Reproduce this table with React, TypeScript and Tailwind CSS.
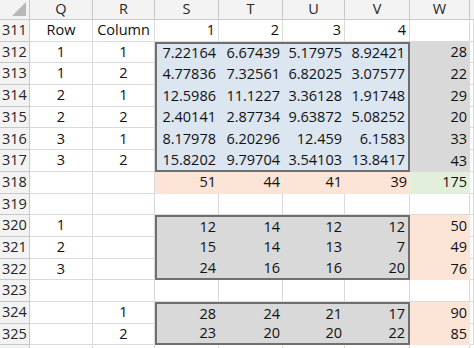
import clsx from "clsx";

type Kind = "head" | "blue" | "sum" | "gray" | "blank";

type SheetRow = {
  n: number;
  q: string;
  r: string;
  vals: string[];
  w: string;
  kind: Kind;
  top?: boolean;
  bottom?: boolean;
};

const ROWS: SheetRow[] = [
  { n: 311, q: "Row", r: "Column", vals: ["1", "2", "3", "4"], w: "", kind: "head" },
  { n: 312, q: "1", r: "1", vals: ["7.22164", "6.67439", "5.17975", "8.92421"], w: "28", kind: "blue", top: true },
  { n: 313, q: "1", r: "2", vals: ["4.77836", "7.32561", "6.82025", "3.07577"], w: "22", kind: "blue" },
  { n: 314, q: "2", r: "1", vals: ["12.5986", "11.1227", "3.36128", "1.91748"], w: "29", kind: "blue" },
  { n: 315, q: "2", r: "2", vals: ["2.40141", "2.87734", "9.63872", "5.08252"], w: "20", kind: "blue" },
  { n: 316, q: "3", r: "1", vals: ["8.17978", "6.20296", "12.459", "6.1583"], w: "33", kind: "blue" },
  { n: 317, q: "3", r: "2", vals: ["15.8202", "9.79704", "3.54103", "13.8417"], w: "43", kind: "blue", bottom: true },
  { n: 318, q: "", r: "", vals: ["51", "44", "41", "39"], w: "175", kind: "sum" },
  { n: 319, q: "", r: "", vals: ["", "", "", ""], w: "", kind: "blank" },
  { n: 320, q: "1", r: "", vals: ["12", "14", "12", "12"], w: "50", kind: "gray", top: true },
  { n: 321, q: "2", r: "", vals: ["15", "14", "13", "7"], w: "49", kind: "gray" },
  { n: 322, q: "3", r: "", vals: ["24", "16", "16", "20"], w: "76", kind: "gray", bottom: true },
  { n: 323, q: "", r: "", vals: ["", "", "", ""], w: "", kind: "blank" },
  { n: 324, q: "", r: "1", vals: ["28", "24", "21", "17"], w: "90", kind: "gray", top: true },
  { n: 325, q: "", r: "2", vals: ["23", "20", "20", "22"], w: "85", kind: "gray", bottom: true },
];

const VAL_WIDTHS = ["w-[64px]", "w-[64px]", "w-[62px]", "w-[65px]"];

const grid = "border-r border-b border-[#dadada]";

function ValueCell({ row, i }: { row: SheetRow; i: number }) {
  const filled = row.kind === "blue" || row.kind === "gray" || row.kind === "sum";
  const boxed = row.kind === "blue" || row.kind === "gray";
  return (
    <div
      className={clsx(
        "flex shrink-0 items-center justify-end px-[3px]",
        VAL_WIDTHS[i],
        !filled && grid,
        row.kind === "blue" && "bg-[#dce6f1]",
        row.kind === "gray" && "bg-[#d9d9d9]",
        row.kind === "sum" && "bg-[#fce4d6]",
        boxed && "border-[#6f6f6f]",
        boxed && row.top && "border-t-2",
        boxed && row.bottom && "border-b-2",
        boxed && i === 0 && "border-l-2",
        boxed && i === 3 && "border-r-2",
      )}
    >
      {row.vals[i]}
    </div>
  );
}

function WCell({ row }: { row: SheetRow }) {
  return (
    <div
      className={clsx(
        "flex w-[60px] shrink-0 items-center justify-end px-[3px]",
        row.kind === "blue" && "bg-[#d9d9d9]",
        row.kind === "sum" && "bg-[#e2efda]",
        row.kind === "gray" && "bg-[#fce4d6]",
        (row.kind === "blank" || row.kind === "head") && grid,
      )}
    >
      {row.w}
    </div>
  );
}

function SheetLine({ row }: { row: SheetRow }) {
  return (
    <div className="flex h-[21.7px]">
      <div className="flex w-[30px] shrink-0 items-center border-r border-b border-[#c8c8c8] bg-[#f3f3f3] pl-[2px] text-[#262626]">
        {row.n}
      </div>
      <div className={clsx("flex w-[63px] shrink-0 items-center justify-center", grid)}>{row.q}</div>
      <div className={clsx("flex w-[62px] shrink-0 items-center justify-center", grid)}>{row.r}</div>
      {row.vals.map((_, i) => (
        <ValueCell key={i} row={row} i={i} />
      ))}
      <WCell row={row} />
      <div className={clsx("flex-1", grid)} />
    </div>
  );
}

export default function App() {
  const headers: [string, string][] = [
    ["Q", "w-[63px]"],
    ["R", "w-[62px]"],
    ["S", "w-[64px]"],
    ["T", "w-[64px]"],
    ["U", "w-[62px]"],
    ["V", "w-[65px]"],
    ["W", "w-[60px]"],
  ];

  return (
    <div className="h-[348px] w-[474px] overflow-hidden bg-white font-['Open_Sans',sans-serif] text-[14.5px] leading-none text-[#111]">
      <div className="flex h-[20px] bg-[#f3f3f3] text-[#262626]">
        <div className="relative w-[30px] shrink-0 border-r border-b border-[#c8c8c8]">
          <svg className="absolute right-[3px] bottom-[3px]" width="14" height="14" viewBox="0 0 14 14">
            <polygon points="14,0 14,14 0,14" fill="#b8b8b8" />
          </svg>
        </div>
        {headers.map(([label, w]) => (
          <div
            key={label}
            className={clsx("flex shrink-0 items-center justify-center border-r border-b border-[#c8c8c8]", w)}
          >
            {label}
          </div>
        ))}
        <div className="flex-1 border-b border-[#c8c8c8]" />
      </div>
      {ROWS.map((row) => (
        <SheetLine key={row.n} row={row} />
      ))}
      <div className="flex h-[10px]">
        <div className="w-[30px] shrink-0 border-r border-[#c8c8c8] bg-[#f3f3f3]" />
        <div className="w-[63px] shrink-0 border-r border-[#dadada]" />
        <div className="w-[62px] shrink-0 border-r border-[#dadada]" />
        <div className="w-[64px] shrink-0 border-r border-[#dadada]" />
        <div className="w-[64px] shrink-0 border-r border-[#dadada]" />
        <div className="w-[62px] shrink-0 border-r border-[#dadada]" />
        <div className="w-[65px] shrink-0 border-r border-[#dadada]" />
        <div className="w-[60px] shrink-0 border-r border-[#dadada]" />
      </div>
    </div>
  );
}
